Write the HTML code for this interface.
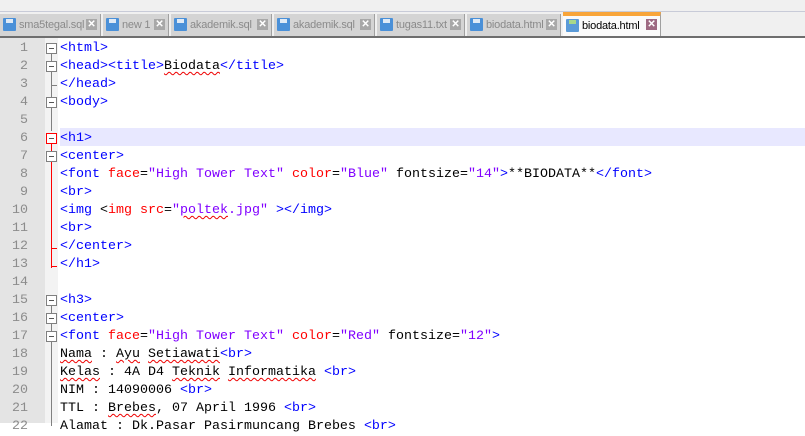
<!DOCTYPE html>
<html><head><meta charset="utf-8"><style>
*{margin:0;padding:0;box-sizing:border-box}
body{width:805px;height:423px;overflow:hidden;background:#fff;position:relative;font-family:"Liberation Sans",sans-serif}
#tb{position:absolute;left:0;top:0;width:805px;height:12px;background:#f0f0f0;border-bottom:1px solid #c8cbd8}
#tabs{position:absolute;left:0;top:12px;width:805px;height:24px;background:#f0f0f0}
.tab{position:absolute;top:2px;height:22px;background:#d4d4d4;border-right:1px solid #a0a0a0;font-size:11px;letter-spacing:-0.2px;color:#8a8a8a;line-height:22px;padding-left:19px;white-space:nowrap}
.tab .ic{position:absolute;left:3px;top:4px;width:13px;height:13px;background:#4a90d8;border-radius:1px}
.tab .ic:after{content:"";position:absolute;left:3px;top:1px;width:7px;height:4px;background:#dfeaf6}
.tab .x{position:absolute;right:3px;top:5px;width:11px;height:11px;background:#a8a8a8;color:#fff;font-size:10px;line-height:11px;text-align:center;font-weight:bold}
.tab.act{top:0;height:24px;background:#fafafa;color:#000;border-top:4px solid #f8a53a;line-height:20px}
.tab.act .ic{top:3px;background:#5a9ad8}
.tab.act .ic:after{background:#a8d88a}
.tab.act .x{top:3px;background:#9e6a82}
#bord{position:absolute;left:0;top:36px;width:805px;height:2px;background:#6e6e6e}
#gut{position:absolute;left:0;top:38px;width:45px;height:385px;background:#e4e4e4}
#fold{position:absolute;left:45px;top:38px;width:13px;height:385px;background:#f3f3f3}
.ln{position:absolute;left:0;width:28px;text-align:right;font:13.33px "Liberation Mono",monospace;color:#8c8c8c;line-height:18px}
.cd{position:absolute;left:60px;font:13.33px "Liberation Mono",monospace;line-height:18px;white-space:pre;color:#000}
.b{color:#0000ff}.r{color:#ff0000}.p{color:#8000ff}
.sq{text-decoration:underline wavy #e00;text-decoration-thickness:1px;text-underline-offset:2px}
.box{position:absolute;left:46px;width:11px;height:11px;border:1px solid #808080;background:#fff}
.box:after{content:"";position:absolute;left:2px;top:4px;width:5px;height:1px;background:#555}
.vl{position:absolute;left:51px;width:1px;background:#808080}
.hl{position:absolute;left:51px;height:1px;width:6px;background:#808080}
</style></head><body>
<div id="tb"></div>
<div id="tabs">
<div class="tab" style="left:0;width:101px"><span class="ic"></span>sma5tegal.sql<span class="x">✕</span></div>
<div class="tab" style="left:103px;width:66px"><span class="ic"></span>new 1<span class="x">✕</span></div>
<div class="tab" style="left:171px;width:101px"><span class="ic"></span>akademik.sql<span class="x">✕</span></div>
<div class="tab" style="left:274px;width:101px"><span class="ic"></span>akademik.sql<span class="x">✕</span></div>
<div class="tab" style="left:377px;width:88px"><span class="ic"></span>tugas11.txt<span class="x">✕</span></div>
<div class="tab" style="left:467px;width:94px"><span class="ic"></span>biodata.html<span class="x">✕</span></div>
<div class="tab act" style="left:563px;width:98px"><span class="ic"></span>biodata.html<span class="x">✕</span></div>
</div>
<div id="bord"></div>
<div id="gut"></div><div id="fold"></div>
<div style="position:absolute;left:60px;top:128px;width:745px;height:18px;background:#e8e8ff"></div>

<div class="ln" style="top:40px">1<br>2<br>3<br>4<br>5<br>6<br>7<br>8<br>9<br>10<br>11<br>12<br>13<br>14<br>15<br>16<br>17<br>18<br>19<br>20<br>21<br>22</div>

<div class="vl" style="top:54px;height:40px"></div>
<div class="hl" style="top:85px"></div>
<div class="vl" style="top:94px;height:37px"></div>
<div class="vl" style="top:144px;height:124px;background:#f00"></div>
<div class="hl" style="top:248px;background:#f00"></div>
<div class="hl" style="top:266px;background:#f00"></div>
<div class="vl" style="top:306px;height:120px"></div>
<div class="box" style="top:43px"></div>
<div class="box" style="top:61px"></div>
<div class="box" style="top:97px"></div>
<div class="box" style="top:133px;border-color:#f00"></div>
<div class="box" style="top:151px"></div>
<div class="box" style="top:295px"></div>
<div class="box" style="top:313px"></div>
<div class="box" style="top:331px"></div>

<div class="cd" style="top:40px"><span class="b">&lt;html&gt;</span>
<span class="b">&lt;head&gt;&lt;title&gt;</span><span class="sq">Biodata</span><span class="b">&lt;/title&gt;</span>
<span class="b">&lt;/head&gt;</span>
<span class="b">&lt;body&gt;</span>

<span class="b">&lt;h1&gt;</span>
<span class="b">&lt;center&gt;</span>
<span class="b">&lt;font </span><span class="r">face</span>=<span class="p">"High Tower Text"</span> <span class="r">color</span>=<span class="p">"Blue"</span> fontsize=<span class="p">"14"</span><span class="b">&gt;</span>**BIODATA**<span class="b">&lt;/font&gt;</span>
<span class="b">&lt;br&gt;</span>
<span class="b">&lt;img </span>&lt;<span class="r">img src</span>=<span class="p">"<span class="sq">poltek</span>.jpg"</span> <span class="b">&gt;&lt;/img&gt;</span>
<span class="b">&lt;br&gt;</span>
<span class="b">&lt;/center&gt;</span>
<span class="b">&lt;/h1&gt;</span>

<span class="b">&lt;h3&gt;</span>
<span class="b">&lt;center&gt;</span>
<span class="b">&lt;font </span><span class="r">face</span>=<span class="p">"High Tower Text"</span> <span class="r">color</span>=<span class="p">"Red"</span> fontsize=<span class="p">"12"</span><span class="b">&gt;</span>
<span class="sq">Nama</span> : <span class="sq">Ayu</span> <span class="sq">Setiawati</span><span class="b">&lt;br&gt;</span>
<span class="sq">Kelas</span> : 4A D4 <span class="sq">Teknik</span> <span class="sq">Informatika</span> <span class="b">&lt;br&gt;</span>
NIM : 14090006 <span class="b">&lt;br&gt;</span>
TTL : <span class="sq">Brebes</span>, 07 April 1996 <span class="b">&lt;br&gt;</span>
Alamat : Dk.Pasar Pasirmuncang Brebes <span class="b">&lt;br&gt;</span></div>
</body></html>
